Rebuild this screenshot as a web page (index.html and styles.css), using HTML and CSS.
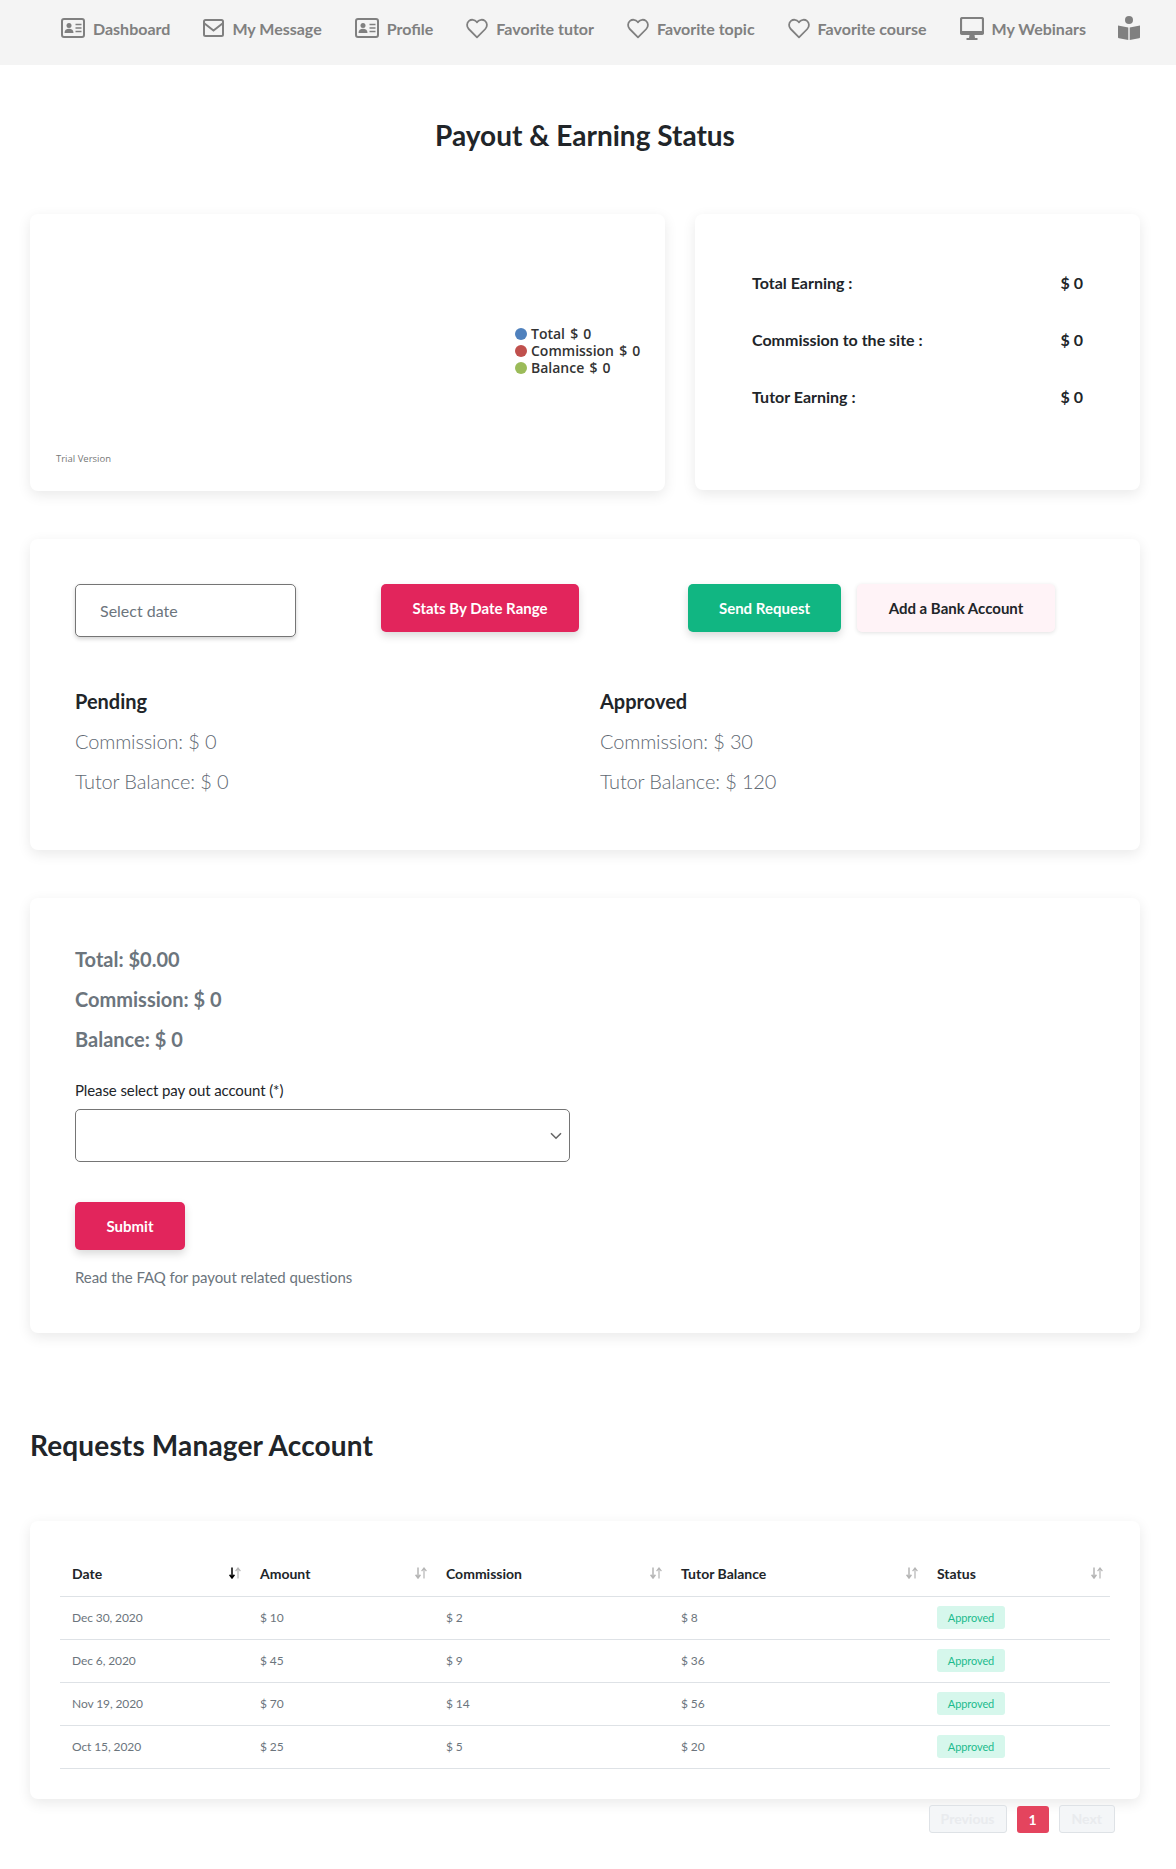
FILE: index.html

```html
<!DOCTYPE html>
<html lang="en">
<head>
    <meta charset="UTF-8">
    <meta name="viewport" content="width=device-width, initial-scale=1.0">
    <title>Payout &amp; Earning Status</title>
    <link rel="stylesheet" href="styles.css">
</head>
<body>

<svg class="icon-defs" width="0" height="0" aria-hidden="true">
    <symbol id="i-card" viewBox="0 0 24 20">
        <rect x="1" y="1" width="22" height="18" rx="2" fill="none" stroke="currentColor" stroke-width="2"/>
        <circle cx="8" cy="7.400" r="2.500" fill="currentColor"/>
        <path d="M3.500 15c0-2.800 1.800-4.200 4.500-4.200s4.500 1.400 4.500 4.200z" fill="currentColor"/>
        <path d="M14.500 6.500h6M14.500 10h6M14.500 13.500h6" stroke="currentColor" stroke-width="1.500"/>
    </symbol>
    <symbol id="i-mail" viewBox="0 0 21 18">
        <rect x="1" y="1" width="19" height="16" rx="1.500" fill="none" stroke="currentColor" stroke-width="2"/>
        <path d="M1.500 4.500 10.500 11.500l9-7" fill="none" stroke="currentColor" stroke-width="2"/>
    </symbol>
    <symbol id="i-heart" viewBox="0 0 22 21">
        <path d="M11 19.300 2.700 11C.4 8.600.6 4.800 3 2.900c2.300-1.800 5.700-1.400 7.500.8l.5.600.5-.6c1.800-2.200 5.200-2.600 7.500-.8 2.400 1.900 2.600 5.700.3 8.100z" fill="none" stroke="currentColor" stroke-width="1.800" stroke-linejoin="round"/>
    </symbol>
    <symbol id="i-desktop" viewBox="0 0 24 23">
        <rect x="1" y="1" width="22" height="15.500" rx="1.500" fill="none" stroke="currentColor" stroke-width="2.200"/>
        <path d="M0 14h24v2a2 2 0 0 1-2 2H2a2 2 0 0 1-2-2z" fill="currentColor"/>
        <path d="M9.500 18h5l.5 3h2.500v2h-11v-2H9z" fill="currentColor"/>
    </symbol>
    <symbol id="i-reader" viewBox="0 0 22 24">
        <circle cx="11" cy="4" r="4" fill="currentColor"/>
        <path d="M0 9.500 10.300 11.500V24L1 22.300c-.6-.1-1-.5-1-1z" fill="currentColor"/>
        <path d="M22 9.500 11.700 11.500V24L21 22.300c.6-.1 1-.5 1-1z" fill="currentColor"/>
    </symbol>
    <symbol id="i-sort-down" viewBox="0 0 6 12">
        <path d="M3 0.500v10M0.600 7.800 3 11l2.400-3.200" fill="none" stroke="currentColor" stroke-width="1.500"/>
    </symbol>
    <symbol id="i-sort-up" viewBox="0 0 6 12">
        <path d="M3 11.500v-10M0.600 4.200 3 1l2.400 3.200" fill="none" stroke="currentColor" stroke-width="1.200"/>
    </symbol>
</svg>

<nav class="topnav">
    <a class="nav-item" href="#"><svg class="nav-icon nav-icon-card"><use href="#i-card"/></svg>Dashboard</a>
    <a class="nav-item" href="#"><svg class="nav-icon nav-icon-mail"><use href="#i-mail"/></svg>My Message</a>
    <a class="nav-item" href="#"><svg class="nav-icon nav-icon-card"><use href="#i-card"/></svg>Profile</a>
    <a class="nav-item" href="#"><svg class="nav-icon nav-icon-heart"><use href="#i-heart"/></svg>Favorite tutor</a>
    <a class="nav-item" href="#"><svg class="nav-icon nav-icon-heart"><use href="#i-heart"/></svg>Favorite topic</a>
    <a class="nav-item" href="#"><svg class="nav-icon nav-icon-heart"><use href="#i-heart"/></svg>Favorite course</a>
    <a class="nav-item" href="#"><svg class="nav-icon nav-icon-desktop"><use href="#i-desktop"/></svg>My Webinars</a>
    <a class="nav-item nav-item-last" href="#"><svg class="nav-icon nav-icon-reader"><use href="#i-reader"/></svg></a>
</nav>

<main class="container">
    <h1 class="page-title">Payout &amp; Earning Status</h1>

    <div class="top-row">
        <section class="card chart-card">
            <ul class="legend">
                <li><span class="dot dot-blue"></span>Total $ 0</li>
                <li><span class="dot dot-red"></span>Commission $ 0</li>
                <li><span class="dot dot-green"></span>Balance $ 0</li>
            </ul>
            <div class="trial">Trial Version</div>
        </section>
        <section class="card summary-card">
            <div class="summary-row"><span>Total Earning :</span><span>$ 0</span></div>
            <div class="summary-row"><span>Commission to the site :</span><span>$ 0</span></div>
            <div class="summary-row"><span>Tutor Earning :</span><span>$ 0</span></div>
        </section>
    </div>

    <section class="card stats-card">
        <div class="stats-actions">
            <input class="date-input" type="text" placeholder="Select date">
            <a class="btn btn-pink btn-range" href="#">Stats By Date Range</a>
            <a class="btn btn-green" href="#">Send Request</a>
            <a class="btn btn-light" href="#">Add a Bank Account</a>
        </div>
        <div class="stats-cols">
            <div>
                <h4>Pending</h4>
                <p>Commission: $ 0</p>
                <p>Tutor Balance: $ 0</p>
            </div>
            <div>
                <h4>Approved</h4>
                <p>Commission: $ 30</p>
                <p>Tutor Balance: $ 120</p>
            </div>
        </div>
    </section>

    <section class="card payout-card">
        <p class="total-line">Total: $0.00</p>
        <p class="total-line">Commission: $ 0</p>
        <p class="total-line">Balance: $ 0</p>
        <label class="field-label" for="account">Please select pay out account (*)</label>
        <div class="select-box">
            <select id="account"></select>
            <svg class="select-arrow" viewBox="0 0 12 8"><path d="M1 1.200 6 6.200l5-5" fill="none" stroke="currentColor" stroke-width="1.600"/></svg>
        </div>
        <a class="btn btn-pink btn-submit" href="#">Submit</a>
        <p class="faq">Read the FAQ for payout related questions</p>
    </section>

    <h2 class="section-title">Requests Manager Account</h2>

    <section class="card table-card">
        <table class="requests">
            <colgroup>
                <col class="col-date"><col class="col-amount"><col class="col-comm"><col class="col-tutor"><col class="col-status">
            </colgroup>
            <thead>
                <tr>
                    <th>Date<span class="sort"><svg class="sort-active"><use href="#i-sort-down"/></svg><svg><use href="#i-sort-up"/></svg></span></th>
                    <th>Amount<span class="sort"><svg><use href="#i-sort-down"/></svg><svg><use href="#i-sort-up"/></svg></span></th>
                    <th>Commission<span class="sort"><svg><use href="#i-sort-down"/></svg><svg><use href="#i-sort-up"/></svg></span></th>
                    <th>Tutor Balance<span class="sort"><svg><use href="#i-sort-down"/></svg><svg><use href="#i-sort-up"/></svg></span></th>
                    <th>Status<span class="sort"><svg><use href="#i-sort-down"/></svg><svg><use href="#i-sort-up"/></svg></span></th>
                </tr>
            </thead>
            <tbody>
                <tr><td>Dec 30, 2020</td><td>$ 10</td><td>$ 2</td><td>$ 8</td><td><span class="badge">Approved</span></td></tr>
                <tr><td>Dec 6, 2020</td><td>$ 45</td><td>$ 9</td><td>$ 36</td><td><span class="badge">Approved</span></td></tr>
                <tr><td>Nov 19, 2020</td><td>$ 70</td><td>$ 14</td><td>$ 56</td><td><span class="badge">Approved</span></td></tr>
                <tr><td>Oct 15, 2020</td><td>$ 25</td><td>$ 5</td><td>$ 20</td><td><span class="badge">Approved</span></td></tr>
            </tbody>
        </table>
    </section>

    <div class="pager">
        <span class="page-btn page-prev">Previous</span>
        <span class="page-current">1</span>
        <span class="page-btn">Next</span>
    </div>
</main>

</body>
</html>
```

FILE: styles.css

```css
* {
    box-sizing: border-box;
}

body {
    font-family: Lato, "Open Sans", sans-serif;
    margin: 0;
    padding: 0;
    background-color: #fff;
    color: #212529;
}

.icon-defs {
    display: block;
    height: 0;
}

/* top nav */
.topnav {
    height: 65px;
    background: #f4f4f4;
    display: flex;
    align-items: center;
    justify-content: flex-end;
    padding-right: 36px;
    padding-bottom: 9px;
    gap: 33px;
}

.nav-item {
    display: flex;
    align-items: center;
    gap: 8px;
    color: #808080;
    font-size: 16px;
    font-weight: 700;
    text-decoration: none;
    white-space: nowrap;
}

.nav-item-last {
    margin-left: -1px;
}

.nav-icon {
    display: block;
}

.nav-icon-card {
    width: 24px;
    height: 20px;
}

.nav-icon-mail {
    width: 21px;
    height: 18px;
}

.nav-icon-heart {
    width: 22px;
    height: 21px;
}

.nav-icon-desktop {
    width: 24px;
    height: 23px;
}

.nav-icon-reader {
    width: 22px;
    height: 24px;
}

.container {
    padding: 0 36px 0 30px;
}

.page-title {
    margin: 0;
    padding-top: 54px;
    height: 149px;
    text-align: center;
    font-size: 28px;
    font-weight: 700;
    line-height: 32px;
}

.card {
    background: #fff;
    border-radius: 8px;
    box-shadow: 0 4px 14px rgba(0, 0, 0, 0.09);
}

/* chart + summary */
.top-row {
    display: flex;
    gap: 30px;
}

.chart-card {
    width: 635px;
    height: 277px;
    position: relative;
    display: flex;
    justify-content: flex-end;
    padding: 111px 22px 0 0;
}

.legend {
    list-style: none;
    margin: 0;
    padding: 0;
    font-family: "Open Sans", sans-serif;
    font-size: 14px;
    line-height: 17px;
    word-spacing: 1.500px;
    color: #333;
    font-weight: 600;
    width: 128px;
}

.legend li {
    display: flex;
    align-items: center;
    gap: 4px;
    white-space: nowrap;
}

.dot {
    width: 12px;
    height: 12px;
    border-radius: 50%;
    flex: none;
}

.dot-blue {
    background: #4f81bd;
}

.dot-red {
    background: #c0504d;
}

.dot-green {
    background: #9bbb59;
}

.trial {
    position: absolute;
    left: 26px;
    bottom: 26px;
    font-size: 9.500px;
    color: #777;
    font-family: "Open Sans", sans-serif;
}

.summary-card {
    width: 445px;
    height: 276px;
    padding: 57px 57px;
}

.summary-row {
    display: flex;
    justify-content: space-between;
    height: 57px;
    line-height: 24px;
    font-size: 16px;
    font-weight: 700;
}

/* stats card */
.stats-card {
    margin-top: 48px;
    height: 311px;
    padding: 45px;
}

.stats-actions {
    display: flex;
    align-items: flex-start;
}

.date-input {
    width: 221px;
    height: 53px;
    padding: 0 24px;
    border: 1px solid #757575;
    border-radius: 5px;
    font: 400 16px Lato, sans-serif;
    color: #757575;
    box-shadow: 0 2px 4px rgba(0, 0, 0, 0.18);
}

.date-input::placeholder {
    color: #6c757d;
    opacity: 1;
}

.btn {
    display: inline-flex;
    align-items: center;
    justify-content: center;
    height: 48px;
    padding-bottom: 1px;
    border-radius: 5px;
    font-size: 15px;
    font-weight: 700;
    text-decoration: none;
    box-shadow: 0 4px 8px rgba(0, 0, 0, 0.15);
}

.btn-pink {
    background: #e2255c;
    color: #fff;
}

.btn-green {
    background: #11b682;
    color: #fff;
    width: 153px;
    margin-left: 109px;
}

.btn-light {
    background: #fff3f7;
    color: #212529;
    width: 198px;
    margin-left: 16px;
    box-shadow: 0 1px 4px rgba(0, 0, 0, 0.12);
}

.btn-range {
    width: 198px;
    margin-left: 85px;
}

.stats-cols {
    display: grid;
    grid-template-columns: 525px 1fr;
    margin-top: 52px;
}

.stats-cols h4 {
    margin: 0 0 16px;
    font-size: 20px;
    line-height: 24px;
    font-weight: 700;
}

.stats-cols p {
    margin: 0 0 16px;
    font-size: 20px;
    line-height: 24px;
    font-weight: 300;
    letter-spacing: -0.15px;
    color: #5f6973;
}

/* payout card */
.payout-card {
    margin-top: 48px;
    height: 435px;
    padding: 49px 45px 0;
}

.total-line {
    margin: 0 0 16px;
    font-size: 20px;
    line-height: 24px;
    font-weight: 700;
    color: #6c757d;
}

.field-label {
    display: block;
    margin-top: 27px;
    margin-bottom: 7px;
    font-size: 15px;
    line-height: 24px;
    letter-spacing: -0.1px;
}

.select-box {
    position: relative;
    width: 495px;
    height: 53px;
}

.select-box select {
    width: 100%;
    height: 100%;
    appearance: none;
    background: #fff;
    border: 1px solid #757575;
    border-radius: 5px;
}

.select-arrow {
    position: absolute;
    right: 8px;
    top: 23px;
    width: 12px;
    height: 8px;
    color: #666;
}

.btn-submit {
    width: 110px;
    margin-top: 40px;
}

.faq {
    margin: 15px 0 0;
    font-size: 15px;
    line-height: 24px;
    letter-spacing: -0.07px;
    color: #6c757d;
}

.section-title {
    margin: 0;
    padding-top: 95px;
    height: 188px;
    font-size: 28px;
    line-height: 34px;
    font-weight: 700;
    letter-spacing: 0.15px;
}

/* table */
.table-card {
    height: 278px;
    padding: 30px;
}

.requests {
    width: 100%;
    border-collapse: collapse;
    table-layout: fixed;
}

.col-date {
    width: 188px;
}

.col-amount {
    width: 186px;
}

.col-comm {
    width: 235px;
}

.col-tutor {
    width: 256px;
}

.requests th {
    position: relative;
    height: 45px;
    padding: 0 12px;
    text-align: left;
    font-size: 14px;
    font-weight: 700;
    border-bottom: 1px solid #dee2e6;
}

.requests td {
    height: 43px;
    padding: 0 12px;
    font-size: 12px;
    letter-spacing: -0.1px;
    color: #6c757d;
    border-bottom: 1px solid #dee2e6;
}

.sort {
    position: absolute;
    right: 7px;
    top: 16px;
    display: flex;
    color: #b5b5b5;
}

.sort svg {
    display: block;
    width: 6px;
    height: 12px;
}

.sort .sort-active {
    color: #000;
}

.badge {
    display: inline-block;
    width: 68px;
    height: 23px;
    line-height: 23px;
    text-align: center;
    font-size: 11px;
    color: #1cbb8c;
    background: #d6f7ec;
    border-radius: 3px;
}

.pager {
    display: flex;
    justify-content: flex-end;
    align-items: center;
    gap: 10px;
    padding-right: 25px;
    margin-top: 6px;
    margin-bottom: 30px;
    font-size: 14px;
}

.page-btn {
    height: 28px;
    line-height: 26px;
    padding: 0 12px;
    border: 1px solid #dee2e6;
    border-radius: 3px;
    background: #f4f6f8;
    color: #e9ebee;
    font-weight: 700;
}

.page-prev {
    padding: 0 11px;
}

.page-current {
    width: 32px;
    height: 27px;
    line-height: 27px;
    text-align: center;
    background: #e4445e;
    color: #fff;
    border-radius: 3px;
    font-weight: 700;
}
```
